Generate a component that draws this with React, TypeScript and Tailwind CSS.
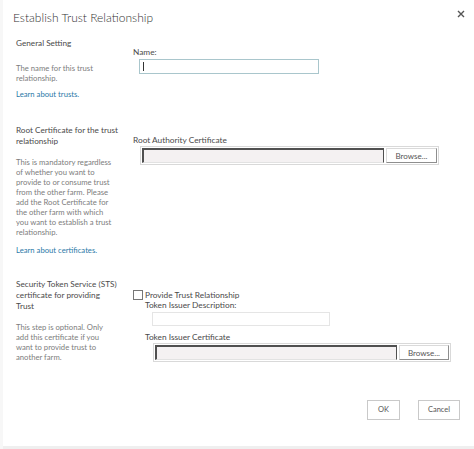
import React from 'react';

const font = "font-['Lato','Open_Sans',sans-serif]";

const FileBox = ({ width, fieldWidth }: { width: string; fieldWidth: string }) => (
  <div className={`${width} h-[19px] flex items-stretch gap-[2px] border border-[#d9d9d9] bg-white p-[1px]`}>
    <div className={`${fieldWidth} bg-[#f4f1f2] border-t-2 border-l-2 border-[#505050] border-r border-b border-r-[#505050] border-b-[#e2e2e2]`} />
    <div className="flex-1 flex items-center justify-center border border-[#dadada] border-r-[#8e8e8e] border-b-[#8e8e8e] bg-white text-[8px] text-[#555]">
      Browse...
    </div>
  </div>
);

const Heading = ({ lines }: { lines: string[] }) => (
  <div className="text-[8.2px] leading-[11px] text-[#4a4a4a]">
    {lines.map((l) => (
      <div key={l} className="whitespace-nowrap">
        {l}
      </div>
    ))}
  </div>
);

const Desc = ({ lines, className }: { lines: string[]; className?: string }) => (
  <div className={`text-[7.7px] leading-[10px] text-[#7d7d7d] ${className ?? ''}`}>
    {lines.map((l) => (
      <div key={l} className="whitespace-nowrap">
        {l}
      </div>
    ))}
  </div>
);

const Learn = ({ text, className }: { text: string; className?: string }) => (
  <div className={`text-[7.7px] leading-[10px] text-[#2b79a8] whitespace-nowrap ${className ?? ''}`}>{text}</div>
);

export default function App() {
  return (
    <div className={`${font} w-[474px] h-[449px] bg-white flex flex-col border-l-[3px] border-[#f7f7f7] relative overflow-hidden`}>
      {/* title bar */}
      <div className="pl-[10px] pt-[10px] text-[12px] leading-[16px] font-light text-[#333]">
        Establish Trust Relationship
      </div>
      <svg className="absolute left-[454px] top-[10px]" width="8" height="8" viewBox="0 0 8 8">
        <path d="M1 1L7 7M7 1L1 7" stroke="#555" strokeWidth="1.4" />
      </svg>

      {/* general setting */}
      <div className="flex mt-[12px]">
        <div className="ml-[13px] w-[104px]">
          <Heading lines={['General Setting']} />
          <Desc className="mt-[14px]" lines={['The name for this trust', 'relationship.']} />
          <Learn className="mt-[6px]" text="Learn about trusts." />
        </div>
        <div className="ml-[13px] pt-[9px]">
          <div className="text-[8.3px] leading-[10px] text-[#4a4a4a]">Name:</div>
          <div className="ml-[6px] mt-[2px] w-[180px] h-[15px] border border-[#a9c6cc] bg-white flex items-center">
            <div className="ml-[3px] w-px h-[9px] bg-[#333]" />
          </div>
        </div>
      </div>

      {/* root certificate */}
      <div className="flex mt-[26px]">
        <div className="ml-[13px] w-[104px]">
          <Heading lines={['Root Certificate for the trust', 'relationship']} />
          <Desc
            className="mt-[10px]"
            lines={[
              'This is mandatory regardless',
              'of whether you want to',
              'provide to or consume trust',
              'from the other farm. Please',
              'add the Root Certificate for',
              'the other farm with which',
              'you want to establish a trust',
              'relationship.',
            ]}
          />
          <Learn className="mt-[8px]" text="Learn about certificates." />
        </div>
        <div className="ml-[13px] pt-[10px]">
          <div className="text-[8.3px] leading-[10px] text-[#4a4a4a]">Root Authority Certificate</div>
          <div className="ml-[7px] mt-[1px]">
            <FileBox width="w-[299px]" fieldWidth="w-[242px]" />
          </div>
        </div>
      </div>

      {/* sts certificate */}
      <div className="flex mt-[24px]">
        <div className="ml-[13px] w-[104px]">
          <Heading lines={['Security Token Service (STS)', 'certificate for providing', 'Trust']} />
          <Desc
            className="mt-[10px]"
            lines={['This step is optional. Only', 'add this certificate if you', 'want to provide trust to', 'another farm.']}
          />
        </div>
        <div className="ml-[13px] pt-[11px]">
          <label className="flex items-center gap-[2px] text-[8.3px] leading-[10px] text-[#4a4a4a]">
            <span className="w-[10px] h-[10px] border border-[#777] bg-white" />
            Provide Trust Relationship
          </label>
          <div className="pl-[12px]">
            <div className="text-[8.3px] leading-[10px] text-[#4a4a4a]">Token Issuer Description:</div>
            <div className="ml-[7px] mt-[2px] w-[178px] h-[14px] border border-[#e5e5e5] bg-white" />
            <div className="mt-[6px] text-[8.3px] leading-[10px] text-[#4a4a4a]">Token Issuer Certificate</div>
            <div className="ml-[8px] mt-[1px]">
              <FileBox width="w-[298px]" fieldWidth="w-[242px]" />
            </div>
          </div>
        </div>
      </div>

      {/* footer */}
      <div className="flex justify-end gap-[18px] pr-[14px] mt-[38px]">
        <button className="w-[33px] h-[20px] border border-[#c9c9c9] bg-white text-[7.5px] text-[#555]">OK</button>
        <button className="w-[42px] h-[20px] border border-[#c9c9c9] bg-white text-[7.5px] text-[#555]">Cancel</button>
      </div>
      <div className="mt-auto h-[3px] bg-[#efefef]" />
    </div>
  );
}
